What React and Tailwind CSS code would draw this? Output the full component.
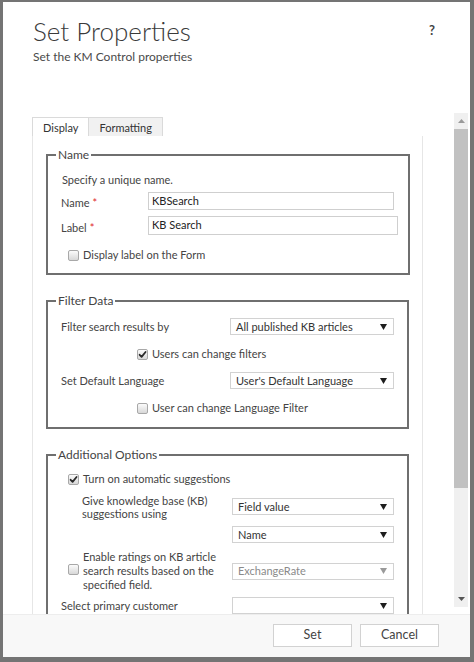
import React from "react";

function Check({ checked }) {
  return (
    <span className="flex h-[11px] w-[11px] shrink-0 items-center justify-center rounded-[2px] border border-[#a8a8a8] bg-linear-to-b from-[#fbfbfb] to-[#d8d8d8]">
      {checked && (
        <svg width="9" height="9" viewBox="0 0 10 10">
          <path d="M1.8 5.3 L4 7.6 L8.4 2.2" fill="none" stroke="#2a2a2a" strokeWidth="2" strokeLinecap="round" strokeLinejoin="round" />
        </svg>
      )}
    </span>
  );
}

function Arrow({ disabled }) {
  return (
    <svg width="7" height="6" viewBox="0 0 7 6" className="shrink-0">
      <polygon points="0,0 7,0 3.5,6" fill={disabled ? "#9a9a9a" : "#1e1e1e"} />
    </svg>
  );
}

function Select({ value, className, disabled }) {
  return (
    <div className={"flex h-[17px] shrink-0 items-center justify-between border border-[#d2d2d2] bg-white pl-[5px] pr-[6px] leading-[14px] " + className}>
      <span className={disabled ? "text-[#8a8a8a]" : "text-[#333]"}>{value}</span>
      <Arrow disabled={disabled} />
    </div>
  );
}

function Legend({ children }) {
  return <legend className="ml-[-5px] px-[2px] text-[12px] leading-[14px] text-[#444]">{children}</legend>;
}

export default function App() {
  return (
    <div className="h-[662px] w-[474px] overflow-hidden bg-[#747474] pl-[3px] pt-[2px] [font-family:Lato,'Noto_Sans',sans-serif]">
      <div className="flex h-[655px] w-[467px] flex-col bg-white text-[11px] text-[#444]">
        {/* header */}
        <div className="flex h-[111px] shrink-0 justify-between pl-[30px] pr-[35px]">
          <div className="pt-[13px]">
            <div className="text-[26px] font-light leading-[32px] text-[#3a3a3a]">Set Properties</div>
            <div className="mt-[2px] text-[12px] leading-[16px] text-[#4a4a4a]">Set the KM Control properties</div>
          </div>
          <div className="pt-[20px] text-[13px] font-bold leading-[16px] text-[#444]">?</div>
        </div>

        {/* body */}
        <div className="flex h-[501px] shrink-0 items-start">
          <div className="h-[501px] flex-1 overflow-hidden pl-[29px] pt-[4px]">
            {/* tabs */}
            <div className="flex h-[19px] text-[11px] leading-[19px]">
              <div className="border-x border-t border-[#dadada] bg-white px-[10px] text-[#333]">Display</div>
              <div className="border-r border-t border-[#dadada] bg-[#f1f1f1] px-[10px] text-[#333]">Formatting</div>
            </div>
            {/* panel */}
            <div className="flex h-[600px] w-[391px] flex-col gap-[19px] border-x border-[#e6e6e6] pl-[13px] pt-[12px]">
              {/* Name */}
              <fieldset className="w-[363px] border-2 border-[#6f6f6f] pb-[11px] pl-[13px] pr-[10px]">
                <Legend>Name</Legend>
                <div className="pl-[1px] pt-[11px] leading-[14px]">Specify a unique name.</div>
                <div className="mt-[5px] flex items-end">
                  <div className="w-[87px] leading-[14px]">
                    Name<span className="ml-[3px] text-[#e0262b]">*</span>
                  </div>
                  <div className="flex h-[18px] w-[246px] items-center border border-[#cfcfcf] pl-[3px] text-[#222]">KBSearch</div>
                </div>
                <div className="mt-[6px] flex items-end">
                  <div className="w-[87px] leading-[14px]">
                    Label<span className="ml-[3px] text-[#e0262b]">*</span>
                  </div>
                  <div className="flex h-[19px] w-[250px] items-center border border-[#cfcfcf] pl-[3px] text-[#222]">KB Search</div>
                </div>
                <div className="mt-[13px] flex items-center gap-[4px] pl-[7px] leading-[14px]">
                  <Check />
                  <span>Display label on the Form</span>
                </div>
              </fieldset>

              {/* Filter Data */}
              <fieldset className="w-[363px] border-2 border-[#6f6f6f] pb-[12px] pl-[13px] pr-[10px]">
                <Legend>Filter Data</Legend>
                <div className="mt-[10px] flex items-center leading-[14px]">
                  <div className="w-[169px]">Filter search results by</div>
                  <Select className="w-[164px]" value="All published KB articles" />
                </div>
                <div className="mt-[12px] flex items-center gap-[4px] pl-[76px] leading-[14px]">
                  <Check checked />
                  <span>Users can change filters</span>
                </div>
                <div className="mt-[11px] flex items-center leading-[14px]">
                  <div className="w-[169px]">Set Default Language</div>
                  <Select className="w-[164px]" value="User's Default Language" />
                </div>
                <div className="mt-[12px] flex items-center gap-[4px] pl-[76px] leading-[14px]">
                  <Check />
                  <span>User can change Language Filter</span>
                </div>
              </fieldset>

              {/* Additional Options */}
              <fieldset className="w-[363px] border-2 border-[#6f6f6f] pb-[12px] pl-[13px] pr-[10px]">
                <Legend>Additional Options</Legend>
                <div className="mt-[10px] flex items-center gap-[4px] pl-[7px] leading-[14px]">
                  <Check checked />
                  <span>Turn on automatic suggestions</span>
                </div>
                <div className="mt-[8px] flex items-start">
                  <div className="w-[171px] pl-[21px] leading-[13px]">
                    Give knowledge base (KB)
                    <br />
                    suggestions using
                  </div>
                  <Select className="mt-[4px] w-[162px]" value="Field value" />
                </div>
                <div className="mt-[6px] flex pl-[171px]">
                  <Select className="h-[16px] w-[162px]" value="Name" />
                </div>
                <div className="mt-[7px] flex items-center">
                  <div className="flex w-[171px] items-center gap-[4px] pl-[7px]">
                    <span className="-mt-[3px]"><Check /></span>
                    <span className="leading-[14px]">
                      Enable ratings on KB article
                      <br />
                      search results based on the
                      <br />
                      specified field.
                    </span>
                  </div>
                  <Select className="w-[162px]" value="ExchangeRate" disabled />
                </div>
                <div className="mt-[5px] flex items-start">
                  <div className="w-[171px] pt-[2px] leading-[14px]">Select primary customer</div>
                  <Select className="w-[162px]" value="" />
                </div>
              </fieldset>
            </div>
          </div>

          {/* scrollbar */}
          <div className="mr-[2px] flex h-[494px] w-[14px] shrink-0 flex-col bg-[#f0f0f0]">
            <div className="flex h-[16px] items-center justify-center">
              <svg width="7" height="4" viewBox="0 0 7 4">
                <polygon points="0,4 7,4 3.5,0" fill="#9a9a9a" />
              </svg>
            </div>
            <div className="h-[359px] bg-[#c1c1c1]"></div>
            <div className="flex-1"></div>
            <div className="flex h-[16px] items-center justify-center">
              <svg width="7" height="4" viewBox="0 0 7 4">
                <polygon points="0,0 7,0 3.5,4" fill="#555" />
              </svg>
            </div>
          </div>
        </div>

        {/* footer */}
        <div className="flex h-[43px] shrink-0 items-start justify-end gap-[8px] border-t border-[#ededed] bg-[#f8f8f8] pr-[31px] pt-[9px]">
          <button className="flex h-[23px] w-[79px] items-center justify-center border border-[#d2d2d2] bg-white text-[12.5px] text-[#444]">Set</button>
          <button className="flex h-[23px] w-[79px] items-center justify-center border border-[#d2d2d2] bg-white text-[12.5px] text-[#444]">Cancel</button>
        </div>
      </div>
    </div>
  );
}
